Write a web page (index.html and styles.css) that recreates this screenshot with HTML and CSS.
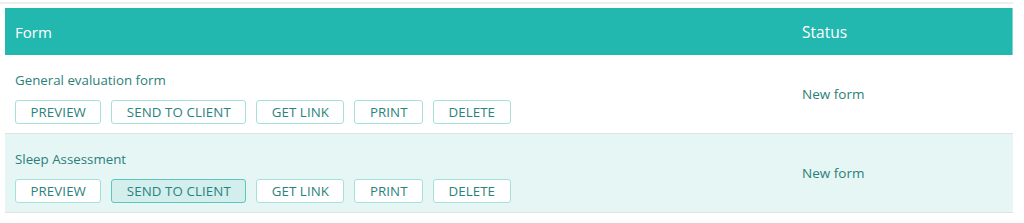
FILE: index.html
```html
<!DOCTYPE html>
<html>
<head>
<meta charset="utf-8">
<link rel="stylesheet" href="styles.css">
</head>
<body>
<div class="topline"></div>
<div class="wrap">
  <div class="table">
    <div class="row head">
      <div class="cell c-form">Form</div>
      <div class="cell c-status">Status</div>
    </div>
    <div class="row">
      <div class="cell c-form">
        <div class="title">General evaluation form</div>
        <div class="actions">
          <button class="btn">PREVIEW</button>
          <button class="btn">SEND TO CLIENT</button>
          <button class="btn">GET LINK</button>
          <button class="btn">PRINT</button>
          <button class="btn">DELETE</button>
        </div>
      </div>
      <div class="cell c-status">New form</div>
    </div>
    <div class="row alt">
      <div class="cell c-form">
        <div class="title">Sleep Assessment</div>
        <div class="actions">
          <button class="btn">PREVIEW</button>
          <button class="btn hover">SEND TO CLIENT</button>
          <button class="btn">GET LINK</button>
          <button class="btn">PRINT</button>
          <button class="btn">DELETE</button>
        </div>
      </div>
      <div class="cell c-status">New form</div>
    </div>
  </div>
</div>
</body>
</html>
```
FILE: styles.css
```css
* { box-sizing: border-box; }
html, body { margin: 0; padding: 0; background: #fff; }
body {
  font-family: "Open Sans", "Noto Sans", sans-serif;
  color: #2b7f79;
  width: 1024px;
  height: 223px;
  overflow: hidden;
}
.topline {
  width: 1013px;
  height: 4px;
  border-bottom: 2px solid #efefef;
  margin-bottom: 4px;
}
.wrap {
  padding-left: 5px;
  width: 1013px;
}
.table {
  display: flex;
  flex-direction: column;
}
.row {
  display: grid;
  grid-template-columns: 787px 1fr;
  align-items: center;
  border-bottom: 1px solid #e2e2e2;
  height: 79px;
}
.row.head {
  background: #22b8b0;
  color: #fff;
  height: 47px;
  border-bottom: none;
  font-size: 15px;
  border-right: 1px solid #7fd6d1;
}
.row.alt { background: #e6f6f5; }
.cell { padding: 0 10px; }
.c-form { align-self: stretch; display: flex; flex-direction: column; justify-content: center; }
.row:not(.head) .c-form { justify-content: flex-start; padding-top: 16px; }
.title { font-size: 13.3px; line-height: 19px; }
.actions { display: flex; gap: 10px; margin-top: 10px; }
.c-status { font-size: 13.5px; padding-left: 10px; }
.head .c-status { font-size: 15.5px; }
.btn {
  font-family: inherit;
  font-size: 13.3px;
  color: #2b827c;
  background: #fff;
  border: 1px solid #a6e0dc;
  border-radius: 3px;
  height: 24px;
  padding: 0 14.4px;
  line-height: 22px;
  letter-spacing: 0.1px;
}
.btn.hover {
  background: #d2efed;
  border-color: #5fc6bf;
}
```
